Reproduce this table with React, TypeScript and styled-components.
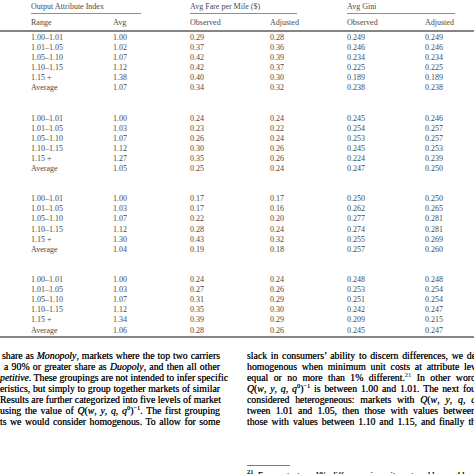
import styled, { createGlobalStyle } from "styled-components";

const GlobalStyle = createGlobalStyle`
  html, body {
    margin: 0;
    padding: 0;
    background: #ffffff;
  }
  body {
    width: 474px;
    height: 474px;
    overflow: hidden;
  }
`;

const Page = styled.div`
  width: 474px;
  height: 474px;
  overflow: hidden;
  background: #ffffff;
  font-family: "Liberation Serif", "Times New Roman", serif;
  color: #1c1c1c;
`;

const Table = styled.div`
  color: #4a4a4a;
  font-size: 8px;
`;

const Row = styled.div<{ $top?: number; $h?: number }>`
  display: grid;
  grid-template-columns: 82px 77px 80px 77px 78px 1fr;
  padding-left: 31px;
  height: ${(p) => p.$h ?? 10.1}px;
  line-height: ${(p) => p.$h ?? 10.1}px;
  margin-top: ${(p) => p.$top ?? 0}px;
  white-space: nowrap;
`;

const GroupHead = styled.div`
  grid-column: span 2;
`;

const GroupLabel = styled.div<{ $w: number }>`
  width: ${(p) => p.$w}px;
  height: 10px;
  line-height: 10px;
  padding-bottom: 1px;
  border-bottom: 1.5px solid #8e8e8e;
`;

const Rule = styled.div<{ $top: number }>`
  height: 2px;
  background: #858585;
  margin-top: ${(p) => p.$top}px;
`;

const Group = styled.div<{ $top: number }>`
  margin-top: ${(p) => p.$top}px;
`;

const Text = styled.div`
  display: grid;
  grid-template-columns: 220px 229px;
  column-gap: 27px;
  margin-top: 11.5px;
  font-size: 9.8px;
  color: #161616;
  text-shadow: 0 0 0.35px #161616;
`;

const Column = styled.div``;

const Line = styled.div<{ $indent?: number }>`
  height: 11px;
  line-height: 11px;
  padding-left: ${(p) => p.$indent ?? 0}px;
  text-align: justify;
  text-align-last: justify;
  white-space: nowrap;
`;

const Sup = styled.sup<{ $link?: boolean }>`
  font-size: 6.4px;
  line-height: 0;
  vertical-align: 3.6px;
  color: ${(p) => (p.$link ? "#3db3d9" : "inherit")};
`;

const FootRule = styled.div`
  width: 43px;
  height: 0.8px;
  background: #7a7a7a;
  margin-top: 38px;
`;

const Footnote = styled.div`
  margin-top: 4px;
  font-size: 8.6px;
  height: 10px;
  line-height: 10px;
  text-align: justify;
  text-align-last: justify;
  white-space: nowrap;
`;

type DataRow = [string, string, string, string, string, string];

const groups: DataRow[][] = [
  [
    ["1.00–1.01", "1.00", "0.29", "0.28", "0.249", "0.249"],
    ["1.01–1.05", "1.02", "0.37", "0.36", "0.246", "0.246"],
    ["1.05–1.10", "1.07", "0.42", "0.39", "0.234", "0.234"],
    ["1.10–1.15", "1.12", "0.42", "0.37", "0.225", "0.225"],
    ["1.15 +", "1.38", "0.40", "0.30", "0.189", "0.189"],
    ["Average", "1.07", "0.34", "0.32", "0.238", "0.238"],
  ],
  [
    ["1.00–1.01", "1.00", "0.24", "0.24", "0.245", "0.246"],
    ["1.01–1.05", "1.03", "0.23", "0.22", "0.254", "0.257"],
    ["1.05–1.10", "1.07", "0.26", "0.24", "0.253", "0.257"],
    ["1.10–1.15", "1.12", "0.30", "0.26", "0.245", "0.253"],
    ["1.15 +", "1.27", "0.35", "0.26", "0.224", "0.239"],
    ["Average", "1.05", "0.25", "0.24", "0.247", "0.250"],
  ],
  [
    ["1.00–1.01", "1.00", "0.17", "0.17", "0.250", "0.250"],
    ["1.01–1.05", "1.03", "0.17", "0.16", "0.262", "0.265"],
    ["1.05–1.10", "1.07", "0.22", "0.20", "0.277", "0.281"],
    ["1.10–1.15", "1.12", "0.28", "0.24", "0.274", "0.281"],
    ["1.15 +", "1.30", "0.43", "0.32", "0.255", "0.269"],
    ["Average", "1.04", "0.19", "0.18", "0.257", "0.260"],
  ],
  [
    ["1.00–1.01", "1.00", "0.24", "0.24", "0.248", "0.248"],
    ["1.01–1.05", "1.03", "0.27", "0.26", "0.253", "0.254"],
    ["1.05–1.10", "1.07", "0.31", "0.29", "0.251", "0.254"],
    ["1.10–1.15", "1.12", "0.35", "0.30", "0.242", "0.247"],
    ["1.15 +", "1.34", "0.39", "0.29", "0.209", "0.215"],
    ["Average", "1.06", "0.28", "0.26", "0.245", "0.247"],
  ],
];

const Qexpr = () => (
  <>
    <i>Q</i>(<i>w</i>, <i>y</i>, <i>q</i>, <i>q</i>
    <Sup>0</Sup>)<Sup>−1</Sup>
  </>
);

export default function App() {
  return (
    <Page>
      <GlobalStyle />
      <Table>
        <Row $top={1.5} $h={14}>
          <GroupHead>
            <GroupLabel $w={110}>Output Attribute Index</GroupLabel>
          </GroupHead>
          <GroupHead>
            <GroupLabel $w={107}>Avg Fare per Mile ($)</GroupLabel>
          </GroupHead>
          <GroupHead>
            <GroupLabel $w={108}>Avg Gini</GroupLabel>
          </GroupHead>
        </Row>
        <Row $top={2.7} $h={10}>
          <div>Range</div>
          <div>Avg</div>
          <div>Observed</div>
          <div>Adjusted</div>
          <div>Observed</div>
          <div>Adjusted</div>
        </Row>
        <Rule $top={1.6} />
        {groups.map((rows, gi) => (
          <Group key={gi} $top={gi === 0 ? 1 : 20.2}>
            {rows.map((r, ri) => (
              <Row key={ri}>
                {r.map((c, ci) => (
                  <div key={ci}>{c}</div>
                ))}
              </Row>
            ))}
          </Group>
        ))}
        <Rule $top={0.7} />
      </Table>

      <Text>
        <Column>
          <Line $indent={2}>
            share as <i>Monopoly</i>, markets where the top two carriers
          </Line>
          <Line $indent={4}>
            a 90% or greater share as <i>Duopoly</i>, and then all other
          </Line>
          <Line>
            <i>petitive</i>. These groupings are not intended to infer specific
          </Line>
          <Line>eristics, but simply to group together markets of similar</Line>
          <Line>Results are further categorized into five levels of market</Line>
          <Line>
            using the value of <Qexpr />. The first grouping
          </Line>
          <Line>ts we would consider homogenous. To allow for some</Line>
        </Column>
        <Column>
          <Line>slack in consumers’ ability to discern differences, we de</Line>
          <Line>homogenous when minimum unit costs at attribute lev</Line>
          <Line>
            equal or no more than 1% different.<Sup $link>21</Sup> In other word
          </Line>
          <Line>
            <Qexpr /> is between 1.00 and 1.01. The next fou
          </Line>
          <Line>
            considered heterogeneous: markets with <i>Q</i>(<i>w</i>, <i>y</i>, <i>q</i>, <i>q</i>
          </Line>
          <Line>tween 1.01 and 1.05, then those with values between</Line>
          <Line>those with values between 1.10 and 1.15, and finally th</Line>
          <FootRule />
          <Footnote>
            <Sup>21</Sup> For context, a 1% difference in unit costs adds roughly t
          </Footnote>
        </Column>
      </Text>
    </Page>
  );
}
